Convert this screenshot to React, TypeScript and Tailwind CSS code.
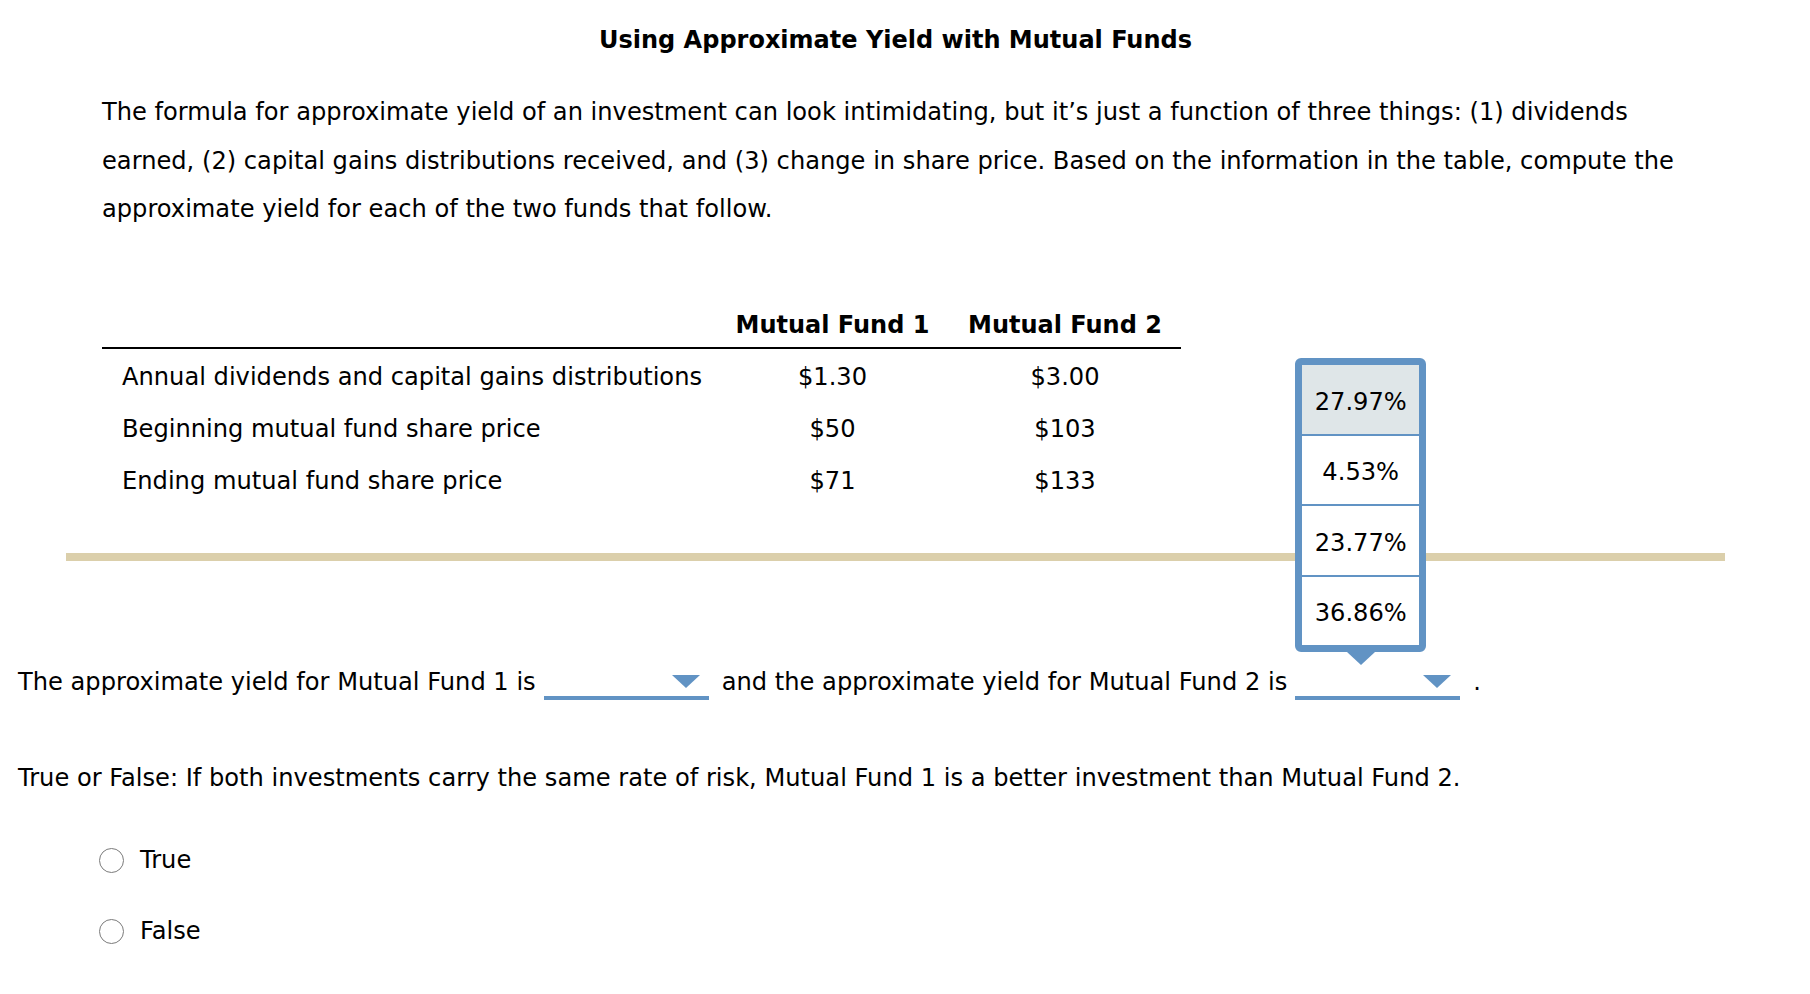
import React from "react";

const rows = [
  { label: "Annual dividends and capital gains distributions", f1: "$1.30", f2: "$3.00" },
  { label: "Beginning mutual fund share price", f1: "$50", f2: "$103" },
  { label: "Ending mutual fund share price", f1: "$71", f2: "$133" },
];

const options = ["27.97%", "4.53%", "23.77%", "36.86%"];

function Caret() {
  return (
    <svg width="28" height="13" viewBox="0 0 28 13" className="block">
      <polygon points="0,0 28,0 14,13" fill="#6193c4" />
    </svg>
  );
}

function Dropdown({ open = false }: { open?: boolean }) {
  return (
    <div className="relative ml-[8px] mr-[13px] flex h-[36px] w-[165px] shrink-0 items-start justify-end border-b-4 border-[#6193c4] pt-[11px] pr-[9px]">
      <Caret />
      {open && (
        <div className="absolute bottom-full left-0 mb-[-1px] z-10 flex w-[131px] flex-col items-center">
          <div className="w-full overflow-hidden rounded-[6px] border-[7px] border-[#6193c4] bg-[#6193c4]">
            <ul className="flex flex-col gap-[2px]">
              {options.map((o, i) => (
                <li
                  key={o}
                  className={
                    "flex h-[68.5px] items-center justify-center pt-[5px] leading-none " +
                    (i === 0 ? "bg-[#dfe6e8]" : "bg-white")
                  }
                >
                  {o}
                </li>
              ))}
            </ul>
          </div>
          <svg width="28" height="13" viewBox="0 0 28 13" className="block">
            <polygon points="0,0 28,0 14,13" fill="#6193c4" />
          </svg>
        </div>
      )}
    </div>
  );
}

function Radio({ label }: { label: string }) {
  return (
    <label className="flex h-[40px] items-center">
      <span className="ml-[81px] block h-[25px] w-[25px] rounded-full border-[1.5px] border-[#7b7b7b] bg-white" />
      <span className="ml-[16px]">{label}</span>
    </label>
  );
}

export default function App() {
  return (
    <div className="relative h-[994px] w-[1810px] overflow-hidden bg-white font-['DejaVu_Sans',Verdana,sans-serif] text-[24.15px] text-black">
      <div className="ml-[66px] w-[1659px] pt-[16px]">
        <h1 className="text-center text-[24px] font-bold leading-[48px]">
          Using Approximate Yield with Mutual Funds
        </h1>

        <p className="mt-[24px] px-[36px] leading-[48.5px]">
          The formula for approximate yield of an investment can look intimidating, but it’s just a function of
          three things: (1) dividends earned, (2) capital gains distributions received, and (3) change in share
          price. Based on the information in the table, compute the approximate yield for each of the two funds
          that follow.
        </p>

        <table className="ml-[36px] mt-[70px] border-collapse">
          <thead>
            <tr className="border-b-2 border-black">
              <th className="h-[44px] w-[614px] p-0" />
              <th className="h-[44px] w-[233px] p-0 text-center text-[24px] font-bold">Mutual Fund 1</th>
              <th className="h-[44px] w-[232px] p-0 text-center text-[24px] font-bold">Mutual Fund 2</th>
            </tr>
          </thead>
          <tbody>
            {rows.map((r) => (
              <tr key={r.label} className="h-[52px]">
                <td className="p-0 pt-[7px] pl-[20px] text-left">{r.label}</td>
                <td className="p-0 pt-[7px] text-center">{r.f1}</td>
                <td className="p-0 pt-[7px] text-center">{r.f2}</td>
              </tr>
            ))}
          </tbody>
        </table>

        <div className="mt-[49.5px] h-[8px] bg-[#dbcfab]" />
      </div>

      <div className="pl-[18px]">
        <div className="mt-[101px] flex h-[40px] items-center whitespace-nowrap">
          <span>The approximate yield for Mutual Fund 1 is</span>
          <Dropdown />
          <span>and the approximate yield for Mutual Fund 2 is</span>
          <Dropdown open />
          <span>.</span>
        </div>

        <p className="mt-[56px] leading-[40px]">
          True or False: If both investments carry the same rate of risk, Mutual Fund 1 is a better investment
          than Mutual Fund 2.
        </p>

        <div className="mt-[42px] flex flex-col gap-[31px]">
          <Radio label="True" />
          <Radio label="False" />
        </div>
      </div>
    </div>
  );
}
